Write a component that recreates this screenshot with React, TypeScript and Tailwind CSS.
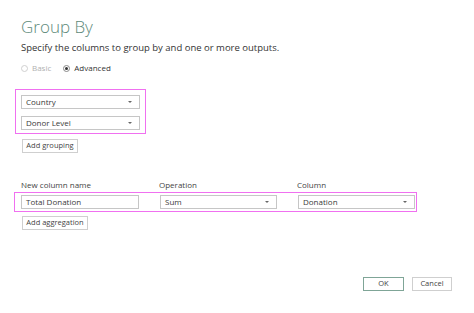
import React from "react";

const font = { fontFamily: '"Open Sans", "Noto Sans", sans-serif' };

function Arrow() {
  return (
    <svg width="4" height="2" viewBox="0 0 4 2" className="shrink-0">
      <path d="M0 0 L4 0 L2 2 Z" fill="#666" />
    </svg>
  );
}

function Select({ label, w }: { label: string; w: string }) {
  return (
    <div className={`${w} h-[14px] border border-[#c6c6c6] bg-white flex items-center justify-between pl-[4px] pr-[7px] text-[8px] leading-none text-[#3a3a3a]`}>
      <span>{label}</span>
      <Arrow />
    </div>
  );
}

function Btn({ label, w, ok }: { label: string; w: string; ok?: boolean }) {
  return (
    <div className={`${w} h-[14px] border ${ok ? "border-[#7fa597]" : "border-[#cfcfcf]"} bg-white flex items-center justify-center text-[7.5px] leading-none text-[#444]`}>
      {label}
    </div>
  );
}

export default function App() {
  return (
    <div className="w-[474px] h-[313px] bg-white overflow-hidden" style={font}>
      <div className="pl-[21px] pt-[16px] flex flex-col">
        <div className="text-[17px] leading-[22px] text-[#5e8a7a] font-light">Group By</div>
        <div className="mt-[3px] text-[9.5px] leading-[14px] text-[#333]">
          Specify the columns to group by and one or more outputs.
        </div>
        <div className="mt-[7px] flex items-center gap-[12px] text-[8px] leading-[12px]">
          <div className="flex items-center gap-[4px] text-[#b0b0b0]">
            <span className="w-[7px] h-[7px] rounded-full border border-[#d0d0d0]" />
            Basic
          </div>
          <div className="flex items-center gap-[4px] text-[#333]">
            <span className="w-[7px] h-[7px] rounded-full border border-[#888] flex items-center justify-center">
              <span className="w-[3px] h-[3px] rounded-full bg-[#333]" />
            </span>
            Advanced
          </div>
        </div>

        <div className="mt-[15px] -ml-[6px] w-[131px] border border-solid border-[#f070f0] pl-[5px] pt-[5px] pb-[3px] flex flex-col gap-[7px] bg-white">
          <Select label="Country" w="w-[119px]" />
          <Select label="Donor Level" w="w-[119px]" />
        </div>
        <div className="mt-[5px] ml-[1px]">
          <Btn label="Add grouping" w="w-[56px]" />
        </div>

        <div className="mt-[27px] flex text-[8px] leading-[10px] text-[#444]">
          <div className="w-[138px]">New column name</div>
          <div className="w-[138px]">Operation</div>
          <div>Column</div>
        </div>
        <div className="mt-[2px] -ml-[7px] w-[403px] border border-solid border-[#f070f0] pl-[6px] py-[2px] flex gap-[21px] bg-white">
          <div className="w-[118px] h-[14px] border border-[#c6c6c6] flex items-center pl-[4px] text-[8px] leading-none text-[#3a3a3a]">
            Total Donation
          </div>
          <Select label="Sum" w="w-[117px]" />
          <Select label="Donation" w="w-[117px]" />
        </div>
        <div className="mt-[4px] ml-[1px]">
          <Btn label="Add aggregation" w="w-[66px]" />
        </div>

        <div className="mt-[47px] flex justify-end gap-[8px] pr-[22px]">
          <Btn label="OK" w="w-[41px]" ok />
          <Btn label="Cancel" w="w-[40px]" />
        </div>
      </div>
    </div>
  );
}
